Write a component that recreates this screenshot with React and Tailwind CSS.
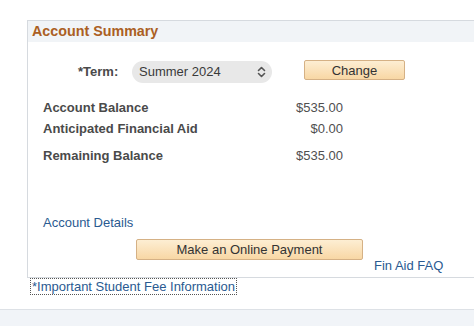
import React from 'react';

function UpDown() {
  return (
    <svg width="9" height="12" viewBox="0 0 9 12" fill="none" stroke="#555" strokeWidth="1.6" strokeLinecap="round" strokeLinejoin="round">
      <path d="M1.5 4.5 L4.5 1.5 L7.5 4.5" />
      <path d="M1.5 7.5 L4.5 10.5 L7.5 7.5" />
    </svg>
  );
}

export default function App() {
  const rows = [
    { label: 'Account Balance', value: '$535.00', mt: 'mt-[17px]' },
    { label: 'Anticipated Financial Aid', value: '$0.00', mt: 'mt-[5px]' },
    { label: 'Remaining Balance', value: '$535.00', mt: 'mt-[11px]' },
  ];

  return (
    <div className="w-[474px] h-[326px] overflow-hidden bg-white font-['Liberation_Sans',Arial,sans-serif] text-[13px]">
      <div className="pt-[20px] pl-[27px]">
        {/* Account summary box */}
        <div className="border-t border-l border-b border-[#d6dadf] h-[258px]">
          <div className="h-[21px] bg-[#f1f4f7] pl-[4px] flex items-center">
            <span className="text-[14.3px] font-bold text-[#ab5f23]">Account Summary</span>
          </div>

          {/* Term row */}
          <div className="mt-[18px] flex items-center h-[23px]">
            <span className="ml-[50px] w-[54px] font-bold text-[#4a4a4a]">*Term:</span>
            <div className="w-[140px] h-[22px] rounded-full bg-[#e8e8e8] flex items-center justify-between pl-[7px] pr-[6px] text-[#3a3a3a]">
              <span>Summer 2024</span>
              <UpDown />
            </div>
            <button className="ml-[32px] -mt-[3px] w-[101px] h-[20px] rounded-[2px] border border-[#d5b185] bg-gradient-to-b from-[#fdeed3] to-[#f8d7a4] text-[#333] leading-none">
              Change
            </button>
          </div>

          {/* Balances */}
          {rows.map((r) => (
            <div key={r.label} className={`${r.mt} flex h-[16px] items-center`}>
              <span className="ml-[15px] w-[253px] font-bold text-[#4a4a4a]">{r.label}</span>
              <span className="w-[47px] text-right text-[#4f4f4f]">{r.value}</span>
            </div>
          ))}

          <div className="mt-[51px] ml-[15px] h-[16px] flex items-center text-[#2a5a91]">Account Details</div>

          <div className="mt-[8px] flex">
            <button className="ml-[108px] w-[227px] h-[21px] rounded-[2px] border border-[#d5b185] bg-gradient-to-b from-[#fdeed3] to-[#f8d7a4] text-[#333] leading-none">
              Make an Online Payment
            </button>
          </div>

          <div className="-mt-[2px] ml-[346px] h-[16px] flex items-center text-[#2a5a91]">Fin Aid FAQ</div>
        </div>

        <div className="flex">
          <span className="ml-[3px] border border-dotted border-[#555] px-[1px] h-[17px] flex items-center text-[#2a5a91]">
            *Important Student Fee Information
          </span>
        </div>
      </div>

      <div className="mt-[14px] h-[20px] border-t border-[#dde1e6] bg-[#f1f4f8]" />
    </div>
  );
}
